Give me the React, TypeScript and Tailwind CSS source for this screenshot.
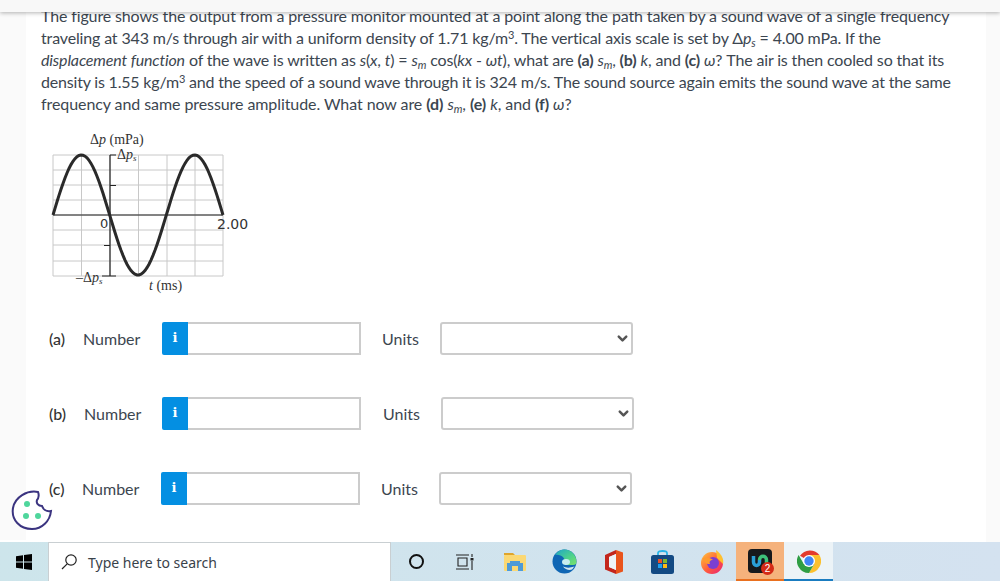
import React from 'react';
import { ChevronDown } from 'lucide-react';

const BODY_FONT = "font-['Lato','Noto_Sans',sans-serif]";

const ROWS = [
  { id: '(a)', labelGap: 'ml-[16px]', infoGap: 'w-[79px]', unitsGap: 'ml-[21px]', selectGap: 'w-[58px]' },
  { id: '(b)', labelGap: 'ml-[17px]', infoGap: 'w-[78px]', unitsGap: 'ml-[22px]', selectGap: 'w-[58px]' },
  { id: '(c)', labelGap: 'ml-[15px]', infoGap: 'w-[79px]', unitsGap: 'ml-[21px]', selectGap: 'w-[58px]' },
];

// one and a half periods across the grid
const WAVE = Array.from({ length: 86 }, (_, i) => {
  const x = 53 + i * 2;
  const y = 215 - 60 * Math.sin((2 * Math.PI * (x - 53)) / 113.33);
  return `${i === 0 ? 'M' : 'L'}${x} ${y.toFixed(1)}`;
}).join(' ');

function Sm() {
  return (
    <i>
      s<sub className="text-[11px]">m</sub>
    </i>
  );
}

function Graph() {
  const verticals = [53, 81.5, 110, 138.5, 167, 195, 223];
  const horizontals = [155, 170, 185, 200, 215, 230, 245, 261, 276];
  return (
    <div className="relative w-[230px] h-[175px] ml-[30px]">
      <svg width="230" height="175" viewBox="30 125 230 175" className="block">
        {verticals.map((x) => (
          <line key={x} x1={x} y1="155" x2={x} y2="276" stroke="#c8c8c8" strokeWidth="1" />
        ))}
        {horizontals.map((y) => (
          <line key={y} x1="53" y1={y} x2="223" y2={y} stroke="#c8c8c8" strokeWidth="1" />
        ))}
        <line x1="53" y1="215" x2="223" y2="215" stroke="#222" strokeWidth="1.2" />
        <line x1="110" y1="155" x2="110" y2="276" stroke="#222" strokeWidth="1.2" />
        <line x1="110" y1="155" x2="116" y2="155" stroke="#222" />
        <line x1="110" y1="185.5" x2="116" y2="185.5" stroke="#222" />
        <line x1="104" y1="245.5" x2="110" y2="245.5" stroke="#222" />
        <line x1="102" y1="276" x2="116" y2="276" stroke="#222" />
        <path d={WAVE} fill="none" stroke="#2a2a2a" strokeWidth="3" />
      </svg>
      <span className="absolute left-[60px] top-[8px] text-[14px] leading-[14px] font-['Liberation_Serif',serif] text-[#333] whitespace-nowrap">
        Δ<i>p</i> (mPa)
      </span>
      <span className="absolute left-[87px] top-[23px] text-[14px] leading-[14px] font-['Liberation_Serif',serif] text-[#333]">
        Δ<i>p<sub className="text-[9px]">s</sub></i>
      </span>
      <span className="absolute left-[46px] top-[146px] text-[14px] leading-[14px] font-['Liberation_Serif',serif] text-[#333]">
        –Δ<i>p<sub className="text-[9px]">s</sub></i>
      </span>
      <span className="absolute left-[119px] top-[154px] text-[14px] leading-[14px] font-['Liberation_Serif',serif] text-[#333] whitespace-nowrap">
        <i>t</i> (ms)
      </span>
      <span className="absolute left-[70px] top-[91px] text-[13px] leading-[16px] font-['DejaVu_Sans',sans-serif] text-[#333]">
        0
      </span>
      <span className="absolute left-[187px] top-[91px] text-[14px] leading-[16px] font-['DejaVu_Sans',sans-serif] text-[#333]">
        2.00
      </span>
    </div>
  );
}

function AnswerRow({ id, labelGap, infoGap, unitsGap, selectGap }: (typeof ROWS)[number]) {
  return (
    <div className="flex items-center h-[33px] ml-[49px]">
      <span className="font-medium text-[#333] w-[18px] whitespace-nowrap">{id}</span>
      <span className={`${labelGap} ${infoGap} text-[#3c4650] whitespace-nowrap`}>Number</span>
      <span className="w-[26px] h-[33px] pb-[1px] bg-[#048fe2] rounded-l-[2px] flex items-center justify-center text-white text-[13px] font-bold font-['DejaVu_Serif',serif]">
        i
      </span>
      <input className="w-[173px] h-[33px] border-2 border-l-0 border-[#cccccc] bg-white outline-none" />
      <span className={`${unitsGap} ${selectGap} text-[#3c4650]`}>Units</span>
      <div className="relative w-[193px] h-[33px]">
        <select className="w-full h-full appearance-none border-2 border-[#cccccc] rounded-[3px] bg-white" />
        <ChevronDown className="absolute right-[3px] top-[9px] w-[15px] h-[15px] text-[#555]" strokeWidth={4} />
      </div>
    </div>
  );
}

function TaskSlot({ className, children }: { className?: string; children: React.ReactNode }) {
  return <div className={`h-full flex items-center justify-center ${className ?? ''}`}>{children}</div>;
}

function Taskbar() {
  return (
    <div className="h-[39px] shrink-0 bg-gradient-to-r from-[#cde5eb] to-[#d4e2f0] flex items-stretch">
      <TaskSlot className="w-[48px]">
        <svg width="16" height="16" viewBox="0 0 16 16" fill="#000">
          <path d="M0 2.3 7 1.2V7.5H0ZM8 1 16 0V7.5H8ZM0 8.5H7V14.8L0 13.7ZM8 8.5H16V16L8 15Z" />
        </svg>
      </TaskSlot>
      <div className="w-[343px] bg-white border-t border-x border-[#c9cfd2] flex items-center pl-[11px] text-[14px] text-[#39424a] font-['Noto_Sans','Open_Sans',sans-serif]">
        <svg width="18" height="18" viewBox="0 0 18 18" fill="none" stroke="#222" strokeWidth="1.2">
          <circle cx="11" cy="7" r="5.2" />
          <path d="M7.2 10.8 2 16" />
        </svg>
        <span className="ml-[10px]">Type here to search</span>
      </div>
      <TaskSlot className="w-[50px]">
        <div className="w-[15px] h-[15px] rounded-full border-[2.5px] border-[#111]" />
      </TaskSlot>
      <TaskSlot className="w-[48px]">
        <svg width="18" height="16" viewBox="0 0 18 16" fill="none" stroke="#222" strokeWidth="1.1">
          <path d="M0 1H13M0 15H13M2 4H11V12H2ZM16 0V3M16 7V16" />
          <rect x="14.5" y="4" width="3" height="2.5" fill="#222" stroke="none" />
        </svg>
      </TaskSlot>
      <TaskSlot className="w-[51px]">
        <svg width="22" height="20" viewBox="0 0 22 20">
          <path d="M0 1H9L11 3H0Z" fill="#dfa52c" />
          <rect y="3" width="22" height="16" rx="1" fill="#fbd873" />
          <path d="M6 9H16V11H19V19H14V14H8V19H3V11H6Z" fill="#4d9ad8" />
        </svg>
      </TaskSlot>
      <TaskSlot className="w-[49px]">
        <svg width="25" height="25" viewBox="0 0 25 25">
          <defs>
            <linearGradient id="edgeG" x1="0" y1="0" x2="1" y2="1">
              <stop offset="0" stopColor="#1fa4c8" />
              <stop offset="0.6" stopColor="#4fd38a" />
              <stop offset="1" stopColor="#7be06a" />
            </linearGradient>
          </defs>
          <circle cx="12.5" cy="12.5" r="12" fill="#0f66b4" />
          <path d="M3 6C6 1.500 10 .5 12.500 .5 19 .5 24.500 6 24.500 13 24.500 15 23.500 16 21 16H13C14.500 9 9 5 3 6Z" fill="url(#edgeG)" />
          <ellipse cx="14" cy="13" rx="4" ry="3" fill="#c9eef0" />
          <path d="M25 25H15C20 24.500 24 21 25 16.500Z" fill="#d2e5ee" />
          <path d="M11 17.500C14 19 18 19 22.500 17.500 21 19 20.500 20 20 20.500 17 21.500 13 20.500 11 17.500Z" fill="#d2e5ee" />
        </svg>
      </TaskSlot>
      <TaskSlot className="w-[49px]">
        <svg width="18" height="24" viewBox="0 0 18 24">
          <path d="M11 0 18 2.500V21.500L11 24Z" fill="#e9541c" />
          <path d="M0 5 11 0V4L4 7V17L11 20V24L0 19.500Z" fill="#c3261c" />
          <path d="M4 7 11 4V20L4 17Z" fill="#eef3f6" />
        </svg>
      </TaskSlot>
      <TaskSlot className="w-[49px]">
        <svg width="23" height="24" viewBox="0 0 23 24" fill="none">
          <path d="M7 6V3C7 1 9 1 11.500 1S16 1 16 3V6" stroke="#29b5e8" strokeWidth="1.800" />
          <rect y="5" width="23" height="19" rx="2.500" fill="#134a83" />
          <rect x="7" y="9" width="4" height="4" fill="#e8502a" />
          <rect x="12" y="9" width="4" height="4" fill="#7cb82f" />
          <rect x="7" y="14" width="4" height="4" fill="#1ea1f1" />
          <rect x="12" y="14" width="4" height="4" fill="#fdb813" />
        </svg>
      </TaskSlot>
      <TaskSlot className="w-[49px]">
        <svg width="24" height="25" viewBox="0 0 24 25">
          <defs>
            <linearGradient id="foxA" x1="0" y1="0" x2="1" y2="1">
              <stop offset="0" stopColor="#ffc83a" />
              <stop offset="0.550" stopColor="#ff5a3c" />
              <stop offset="1" stopColor="#e6207a" />
            </linearGradient>
          </defs>
          <circle cx="12" cy="14" r="11" fill="url(#foxA)" />
          <path d="M16 1C22 6 24 10 23 15L17 9Z" fill="#ffbf2e" />
          <circle cx="13" cy="14" r="6" fill="#7a3fd1" />
          <path d="M3 9C7 8 11 9 13 11 10 11 9 13 10 15 6 15 3 13 3 9Z" fill="#ff9a2e" />
        </svg>
      </TaskSlot>
      <TaskSlot className="w-[48px] bg-[#f5b27c] border-b-2 border-[#e9701f] relative">
        <svg width="24" height="24" viewBox="0 0 24 24" fill="none">
          <rect width="24" height="24" rx="4" fill="#17191c" />
          <path d="M5.500 7V13C5.500 17.500 11.500 17.500 11.500 13V11" stroke="#2a9fd8" strokeWidth="3.500" />
          <path d="M11.500 11C11.500 6 18.500 6 18.500 11V14" stroke="#3ec27a" strokeWidth="3.500" />
        </svg>
        <span className="absolute left-[25px] top-[20px] w-[13px] h-[13px] rounded-full bg-[#d42a17] text-white text-[10px] leading-[13px] text-center font-['Liberation_Sans',sans-serif]">
          2
        </span>
      </TaskSlot>
      <TaskSlot className="w-[49px] bg-[#ecf3f7] border-b-2 border-[#1a7cc0]">
        <svg width="24" height="24" viewBox="0 0 24 24">
          <path d="M12 12 3 6.800A12 12 0 0 1 22.400 6H12Z" fill="#e33b2e" />
          <path d="M12 24A12 12 0 0 0 22.400 6H12L17.200 15Z" fill="#fbc02d" />
          <path d="M12 24A12 12 0 0 1 1.600 6L6.800 15 12 12 17.200 15Z" fill="#2f9e44" />
          <circle cx="12" cy="12" r="6" fill="#fff" />
          <circle cx="12" cy="12" r="4.700" fill="#3f86f4" />
        </svg>
      </TaskSlot>
    </div>
  );
}

export default function App() {
  return (
    <div className={`relative w-[1000px] h-[581px] overflow-hidden flex flex-col bg-white ${BODY_FONT}`}>
      <div className="h-[12px] shrink-0 bg-[#f8f8f8] shadow-[0_1px_4px_rgba(0,0,0,0.3)] relative z-10" />
      <div className="flex flex-1 min-h-0">
        <div className="w-[26px] bg-[#fafafa] mb-[2px]" />
        <main className="flex-1 bg-white overflow-hidden">
          <p className="mt-[-7px] ml-[15px] text-[16px] leading-[22px] tracking-[-0.15px] text-[#3c4650] whitespace-nowrap">
            <span className="tracking-[-0.135px]">The figure shows the output from a pressure monitor mounted at a point along the path taken by a sound wave of a single frequency</span>
            <br />
            traveling at 343 m/s through air with a uniform density of 1.71 kg/m<sup className="text-[11px]">3</sup>. The vertical axis scale is set by Δ<i>p<sub className="text-[11px]">s</sub></i> = 4.00 mPa. If the
            <br />
            <i>displacement function</i> of the wave is written as <i>s</i>(<i>x</i>, <i>t</i>) = <Sm /> cos(<i>kx</i> - <i>ωt</i>), what are <span className="font-bold">(a)</span> <Sm />, <span className="font-bold">(b)</span> <i>k</i>, and <span className="font-bold">(c)</span> <i>ω</i>? The air is then cooled so that its
            <br />
            <span className="tracking-[-0.19px]">density is 1.55 kg/m<sup className="text-[11px]">3</sup> and the speed of a sound wave through it is 324 m/s. The sound source again emits the sound wave at the same</span>
            <br />
            <span className="tracking-[-0.08px]">frequency and same pressure amplitude. What now are <span className="font-bold">(d)</span> <Sm />, <span className="font-bold">(e)</span> <i>k</i>, and <span className="font-bold">(f)</span> <i>ω</i>?</span>
          </p>
        </main>
        <div className="w-[14px] bg-[#fafafa]" />
      </div>
      <div className="absolute left-0 top-[125px] right-0">
        <Graph />
      </div>
      <div className="absolute left-0 top-[322px] right-0 flex flex-col gap-[42px] text-[16px]">
        {ROWS.map((row) => (
          <AnswerRow key={row.id} {...row} />
        ))}
      </div>
      <svg className="absolute left-[11px] top-[489px]" width="42" height="42" viewBox="0 0 42 42" fill="none">
        <path
          d="M27 3C16 1 4 8 2 19 0 31 9 40 21 40 31 40 39 32 40 22 35 23 32 20 31 17 27 17 25 14 26 11 28 9 28 5 27 3Z"
          fill="#fff"
          stroke="#3b3480"
          strokeWidth="2"
        />
        <circle cx="16" cy="15" r="3" fill="#4fd69c" />
        <circle cx="15" cy="27" r="3" fill="#4fd69c" />
        <circle cx="27" cy="27" r="3" fill="#4fd69c" />
      </svg>
      <Taskbar />
    </div>
  );
}
